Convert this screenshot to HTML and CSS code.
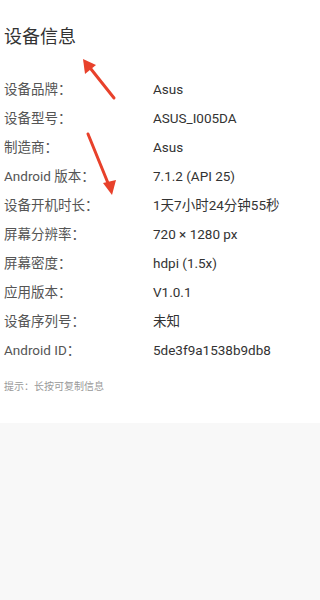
FILE: index.html
```html
<!DOCTYPE html>
<html lang="zh-CN">
<head>
  <meta charset="UTF-8">
  <title>设备信息</title>
  <link rel="stylesheet" href="styles.css">
</head>
<body>

<div class="panel">
  <h1 class="titulo">设备信息</h1>

  <div class="info">
    <span class="etiqueta">设备品牌：</span><span class="valor">Asus</span>
    <span class="etiqueta">设备型号：</span><span class="valor">ASUS_I005DA</span>
    <span class="etiqueta">制造商：</span><span class="valor">Asus</span>
    <span class="etiqueta">Android 版本：</span><span class="valor">7.1.2 (API 25)</span>
    <span class="etiqueta">设备开机时长：</span><span class="valor">1天7小时24分钟55秒</span>
    <span class="etiqueta">屏幕分辨率：</span><span class="valor">720 × 1280 px</span>
    <span class="etiqueta">屏幕密度：</span><span class="valor">hdpi (1.5x)</span>
    <span class="etiqueta">应用版本：</span><span class="valor">V1.0.1</span>
    <span class="etiqueta">设备序列号：</span><span class="valor">未知</span>
    <span class="etiqueta">Android ID：</span><span class="valor">5de3f9a1538b9db8</span>
  </div>

  <p class="aviso">提示：长按可复制信息</p>

  <!-- flechas de anotación -->
  <svg class="flechas" width="320" height="220" viewBox="0 0 320 220">
    <g stroke="#e8412b" stroke-width="3" stroke-linecap="round" fill="none">
      <line x1="114" y1="98" x2="87" y2="64"/>
      <line x1="88" y1="134" x2="110" y2="188"/>
    </g>
    <g fill="#e8412b">
      <polygon points="83,59 96,65 85,74"/>
      <polygon points="112,195 103,183 116,180"/>
    </g>
  </svg>
</div>

</body>
</html>
```

FILE: styles.css
```css
body {
  margin: 0;
  background-color: #f8f8f8;
  font-family: Roboto, "Noto Sans CJK SC", sans-serif;
}
.panel {
  position: relative;
  background-color: white;
  padding: 24px 0 0 4px;
  height: 399px;
}
.titulo {
  margin: 0;
  font-size: 18px;
  font-weight: normal;
  line-height: 26px;
  color: #333;
}
.info {
  display: grid;
  grid-template-columns: 149px 1fr;
  margin-top: 25px;
  font-size: 13.5px;
  line-height: 29px;
}
.etiqueta {
  color: #555;
}
.valor {
  color: #333;
}
.aviso {
  margin: 15px 0 0;
  font-size: 10px;
  line-height: 14px;
  color: #999;
}
.flechas {
  position: absolute;
  left: 0;
  top: 0;
}
```
